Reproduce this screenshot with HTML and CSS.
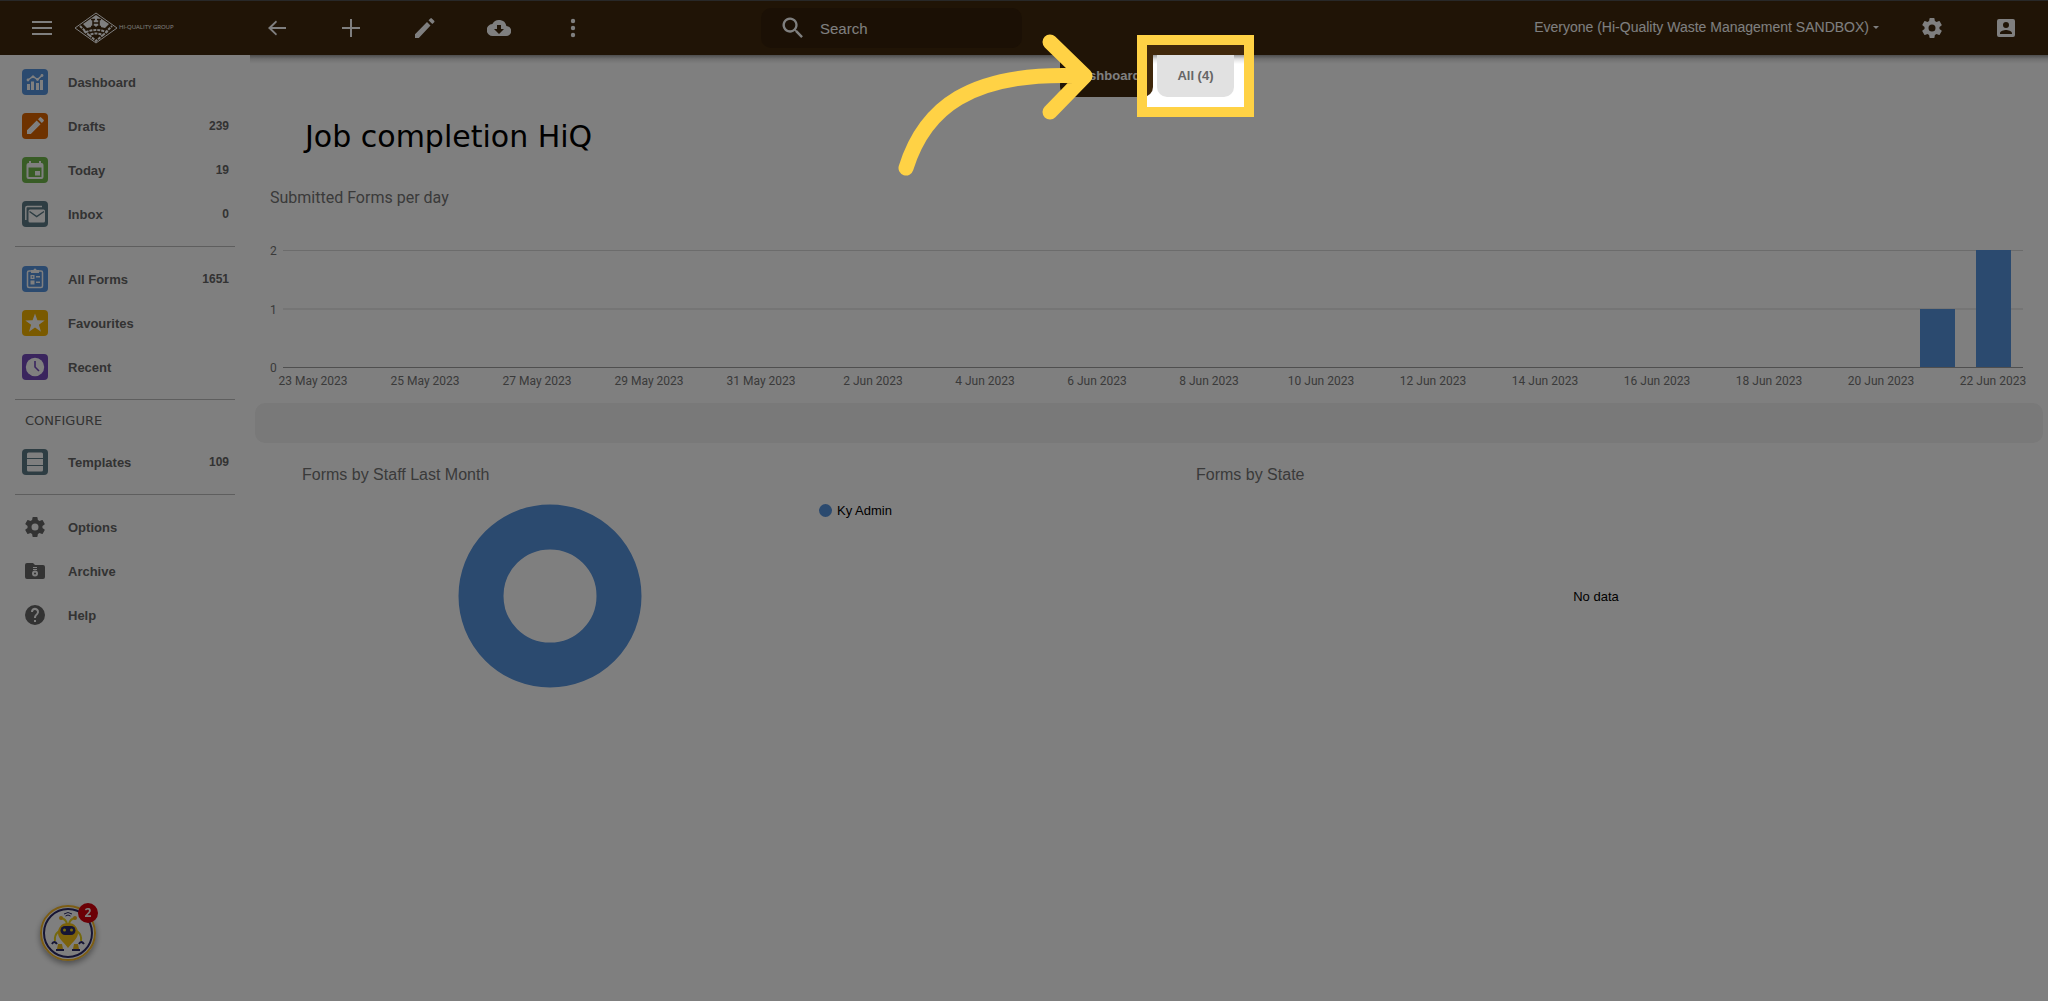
FILE: index.html
```html
<!DOCTYPE html>
<html lang="en">
<head>
<meta charset="utf-8">
<title>Dashboard</title>
<link rel="stylesheet" href="styles.css">
</head>
<body>
<header class="topbar">
  <div class="brand">
    <button class="icon-btn menu-btn" aria-label="Menu"><svg width="24" height="24" viewBox="0 0 24 24"><path d="M2 5h20v2H2zm0 6h20v2H2zm0 6h20v2H2z"/></svg></button>
    <svg class="logo" width="110" height="32" viewBox="0 0 110 32" aria-label="Hi-Quality Group">
      <path d="M22 1 43 16 22 31 1 16Z" fill="none" stroke="#fff" stroke-width="1"/>
      <path d="M22 3 35 12 31 16Q22 13 13 16L9 12Z"/>
      <path d="M17 7.500h4M23 7.500h4M17 14.500h4M23 14.500h4M19 7v8M25 7v8M19 11h6" fill="none" stroke="#40280c" stroke-width="1.500"/>
      <path d="M6 14 12 20Q22 16 32 20L38 14M10 19l5 4q7-3 14 0l5-4M15 23l7 6 7-6" fill="none" stroke="#fff" stroke-width="2" stroke-dasharray="3 1"/>
      <text x="45" y="17" class="logo-text">HI-QUALITY GROUP</text>
    </svg>
  </div>
  <div class="tools">
    <button class="icon-btn" aria-label="Back"><svg width="24" height="24" viewBox="0 0 24 24"><path d="M21 11H7l5-5-1-1.500L3 12l8 7.500 1-1.500-5-5h14z"/></svg></button>
    <button class="icon-btn" aria-label="Add"><svg width="24" height="24" viewBox="0 0 24 24"><path d="M11 3h2v8h8v2h-8v8h-2v-8H3v-2h8z"/></svg></button>
    <button class="icon-btn" aria-label="Edit"><svg width="24" height="24" viewBox="0 0 24 24"><path d="M2 18.200V22h3.800L17.500 9.500 14 6zM21.200 6.200a1 1 0 0 0 0-1.400l-2.400-2.400a1 1 0 0 0-1.400 0L15.500 4.300l3.800 3.800z"/></svg></button>
    <button class="icon-btn" aria-label="Download"><svg width="24" height="24" viewBox="0 0 24 24"><path d="M19.400 10A7.500 7.500 0 0 0 5.400 8 6 6 0 0 0 6 20h13a5 5 0 0 0 .4-10zM17 13l-5 5-5-5h3V9h4v4z"/></svg></button>
    <button class="icon-btn" aria-label="More"><svg width="24" height="24" viewBox="0 0 24 24"><circle cx="12" cy="5" r="2.200"/><circle cx="12" cy="12" r="2.200"/><circle cx="12" cy="19" r="2.200"/></svg></button>
  </div>
  <label class="search">
    <svg width="28" height="28" viewBox="0 0 24 24"><path d="M15.500 14h-.8l-.3-.3a6.500 6.500 0 1 0-.7.700l.3.300v.8l5 5 1.500-1.500zm-6 0a4.500 4.500 0 1 1 0-9 4.500 4.500 0 0 1 0 9z"/></svg>
    <input type="text" placeholder="Search" aria-label="Search">
  </label>
  <div class="account">
    <button class="org">Everyone (Hi-Quality Waste Management SANDBOX)<span class="caret"></span></button>
    <button class="icon-btn" aria-label="Settings"><svg width="24" height="24" viewBox="0 0 24 24"><use href="#gear"/></svg></button>
    <button class="icon-btn" aria-label="Profile"><svg width="24" height="24" viewBox="0 0 24 24"><path d="M5 3a2 2 0 0 0-2 2v14a2 2 0 0 0 2 2h14a2 2 0 0 0 2-2V5a2 2 0 0 0-2-2zm7 3a3 3 0 1 1 0 6 3 3 0 0 1 0-6zm6 12H6v-1c0-2 4-3.100 6-3.100s6 1.100 6 3.100z"/></svg></button>
  </div>
</header>

<div class="shell">
  <nav class="sidebar">
    <ul>
      <li><a href="#"><svg class="tile blue" viewBox="0 0 26 26"><path d="M5 15h3v6H5zm4-2.500h3V21H9zm5 1.500h3v7h-3zm4-3h3v10h-3z"/><path d="m6 11 5-3.500 4.500 3L20 6.500" class="line"/><circle cx="6" cy="11" r="1.400"/><circle cx="11" cy="7.800" r="1.400"/><circle cx="15.500" cy="10.500" r="1.400"/><circle cx="20" cy="6.500" r="1.400"/></svg><span>Dashboard</span></a></li>
      <li><a href="#"><svg class="tile orange" viewBox="0 0 26 26"><path d="M5 17.200V21h3.800L18.500 11.300 14.700 7.500zM21.600 8.200a1 1 0 0 0 0-1.400l-2.400-2.400a1 1 0 0 0-1.400 0L16 6.200 19.800 10z"/></svg><span>Drafts</span><b>239</b></a></li>
      <li><a href="#"><svg class="tile green" viewBox="0 0 26 26"><path fill-rule="evenodd" d="M7 4h2v2h8V4h2v2h.5a2 2 0 0 1 2 2v12a2 2 0 0 1-2 2h-13a2 2 0 0 1-2-2V8a2 2 0 0 1 2-2H7zM6.500 10.500V20h13v-9.500zM13 14h5v4.500h-5z"/></svg><span>Today</span><b>19</b></a></li>
      <li><a href="#"><svg class="tile slate" viewBox="0 0 26 26"><path d="M3.800 19V7a1.500 1.500 0 0 1 1.500-1.500H20" class="line"/><rect x="6.500" y="8.500" width="16.500" height="13" rx="1.500"/><path d="m7.500 10.500 7.200 5 7.300-5" fill="none" stroke="#5c7b87" stroke-width="1.500"/></svg><span>Inbox</span><b>0</b></a></li>
    </ul>
    <ul>
      <li><a href="#"><svg class="tile blue" viewBox="0 0 26 26"><rect x="5.500" y="5" width="15" height="16.500" rx="1.500" class="line"/><path d="M9 4h2.500a1.500 1.500 0 0 1 3 0H17v3H9z"/><path fill-rule="evenodd" d="M8.500 9h4v4h-4zM9.800 10.300v1.400h1.400v-1.400zM14 10h4v1.500h-4zM8.500 14.500h4v4h-4zM14 15.500h4V17h-4z"/></svg><span>All Forms</span><b>1651</b></a></li>
      <li><a href="#"><svg class="tile gold" viewBox="0 0 26 26"><path d="m13 3.500 2.400 6.800 7.300.2-5.800 4.300 2.100 7-6-4.200-6 4.200 2.100-7-5.800-4.300 7.300-.2z"/></svg><span>Favourites</span></a></li>
      <li><a href="#"><svg class="tile purple" viewBox="0 0 26 26"><circle cx="13" cy="13" r="9.200"/><path d="M13 7v6l4 4" fill="none" stroke="#744bbd" stroke-width="1.600"/></svg><span>Recent</span></a></li>
    </ul>
    <h2>CONFIGURE</h2>
    <ul class="configure">
      <li><a href="#"><svg class="tile slate" viewBox="0 0 26 26"><path d="M6.500 3.500h13a1.500 1.500 0 0 1 1.500 1.500v4H5V5a1.500 1.500 0 0 1 1.500-1.500zM5 10h16v6H5zM5 17h16v4a1.500 1.500 0 0 1-1.500 1.500h-13A1.500 1.500 0 0 1 5 21z"/></svg><span>Templates</span><b>109</b></a></li>
    </ul>
    <ul>
      <li><a href="#"><svg class="glyph" viewBox="0 0 24 24"><path id="gear" d="M12 15.500a3.500 3.500 0 1 1 0-7 3.500 3.500 0 0 1 0 7zm7.430-2.530a7.800 7.800 0 0 0 0-1.940l2.110-1.630a.5.5 0 0 0 .12-.64l-2-3.460a.5.5 0 0 0-.61-.22l-2.490 1a7.300 7.300 0 0 0-1.690-.98l-.38-2.650A.5.5 0 0 0 14 2h-4a.5.5 0 0 0-.49.420l-.38 2.650c-.61.250-1.170.590-1.690.980l-2.490-1a.5.5 0 0 0-.61.220l-2 3.460a.5.5 0 0 0 .12.640l2.110 1.630a7.800 7.800 0 0 0 0 1.940l-2.110 1.660a.5.5 0 0 0-.12.640l2 3.460c.12.220.390.300.610.220l2.490-1.010c.52.400 1.080.730 1.690.980l.38 2.650c.03.240.240.420.490.420h4c.25 0 .46-.18.490-.42l.38-2.650a7.700 7.700 0 0 0 1.690-.98l2.490 1.010c.22.080.490 0 .61-.22l2-3.460a.5.5 0 0 0-.12-.64z"/></svg><span>Options</span></a></li>
      <li><a href="#"><svg class="glyph" viewBox="0 0 24 24"><path fill-rule="evenodd" d="M4 4h6l2 2h8a2 2 0 0 1 2 2v10a2 2 0 0 1-2 2H4a2 2 0 0 1-2-2V6a2 2 0 0 1 2-2zm6 4v1h4V8zm0 2v1h4v-1zm2 1.500a3 3 0 1 0 0 6 3 3 0 0 0 0-6zm0 2a1 1 0 1 1 0 2 1 1 0 0 1 0-2z"/></svg><span>Archive</span></a></li>
      <li><a href="#"><svg class="glyph" viewBox="0 0 24 24"><path d="M12 2a10 10 0 1 0 0 20 10 10 0 0 0 0-20zm1 17h-2v-2h2zm2.070-7.750-.9.920C13.450 12.900 13 13.500 13 15h-2v-.5c0-1.100.45-2.100 1.170-2.830l1.240-1.260A2 2 0 1 0 10 9H8a4 4 0 1 1 7.070 2.250z"/></svg><span>Help</span></a></li>
    </ul>
  </nav>

  <main class="content">
    <div class="tabs">
      <button class="tab active">Dashboard</button>
      <button class="tab">All (4)</button>
    </div>
    <h1>Job completion HiQ</h1>
    <section class="per-day">
      <h3>Submitted Forms per day</h3>
      <div class="chart">
        <div class="y-axis"><span>2</span><span>1</span><span>0</span></div>
        <ol class="plot">
          <li><small>23 May 2023</small></li><li></li>
          <li><small>25 May 2023</small></li><li></li>
          <li><small>27 May 2023</small></li><li></li>
          <li><small>29 May 2023</small></li><li></li>
          <li><small>31 May 2023</small></li><li></li>
          <li><small>2 Jun 2023</small></li><li></li>
          <li><small>4 Jun 2023</small></li><li></li>
          <li><small>6 Jun 2023</small></li><li></li>
          <li><small>8 Jun 2023</small></li><li></li>
          <li><small>10 Jun 2023</small></li><li></li>
          <li><small>12 Jun 2023</small></li><li></li>
          <li><small>14 Jun 2023</small></li><li></li>
          <li><small>16 Jun 2023</small></li><li></li>
          <li><small>18 Jun 2023</small></li><li></li>
          <li><small>20 Jun 2023</small></li>
          <li><i class="bar" style="height:50%"></i></li>
          <li><i class="bar" style="height:100%"></i><small>22 Jun 2023</small></li>
        </ol>
      </div>
    </section>
    <div class="band"></div>
    <div class="split">
      <section class="panel">
        <h3>Forms by Staff Last Month</h3>
        <div class="donut-row">
          <svg width="184" height="184" viewBox="0 0 184 184" aria-label="Ky Admin 100%"><circle cx="92" cy="92" r="69" fill="none" stroke="#5794de" stroke-width="45"/></svg>
          <div class="legend"><span class="dot"></span>Ky Admin</div>
        </div>
      </section>
      <section class="panel">
        <h3>Forms by State</h3>
        <p class="empty">No data</p>
      </section>
    </div>
  </main>
</div>

<button class="assistant" aria-label="Assistant">
  <svg width="56" height="56" viewBox="0 0 56 56">
    <circle cx="28" cy="28" r="27" fill="#fff" stroke="#f6b828" stroke-width="2"/>
    <circle cx="28" cy="28" r="24" fill="#fff" stroke="#2c2a68" stroke-width="2"/>
    <path d="M24 9q4-3 8 0M25.500 11q2.500-2 5 0" fill="none" stroke="#2c2a68"/>
    <path d="M21 13q5 1 6 6M35 13q-5 1-6 6M19 26q-5 4-4 10M37 26q5 4 4 10" fill="none" stroke="#e8d21c" stroke-width="2"/>
    <circle cx="21" cy="13" r="2" fill="#f0b41e"/><circle cx="35" cy="13" r="2" fill="#f0b41e"/>
    <path d="M28 18c-7 0-10 5-10 10 0 6 6 9 10 15 4-6 10-9 10-15 0-5-3-10-10-10z" fill="#f8c416"/>
    <rect x="20.500" y="21" width="15" height="9" rx="4.500" fill="#2c2a68"/>
    <circle cx="24.500" cy="25" r="1.500" fill="#f4dc20"/><circle cx="31.500" cy="25" r="1.500" fill="#f4dc20"/>
    <path d="M12 39q2-4 5 0M39 39q2-4 5 0M16 45h8M32 45h8" fill="none" stroke="#2c2a68" stroke-width="2"/>
    <path d="M17 44l1-5h4l1 5zM33 44l1-5h4l1 5z" fill="#e8b81c"/>
  </svg>
  <span class="badge">2</span>
</button>

<div class="spotlight"></div>
<svg class="pointer" width="212" height="152" viewBox="0 0 212 152"><path d="M16 142C34 84 78 44 195 50M160 16l35 34-35 36"/></svg>
</body>
</html>
```
FILE: styles.css
```css
* { box-sizing: border-box; }
body {
  margin: 0;
  min-height: 100vh;
  display: flex;
  flex-direction: column;
  background: #fff;
  font-family: "Liberation Sans", Arial, sans-serif;
  font-size: 13px;
  color: #666;
  overflow: hidden;
}
ul, ol { list-style: none; margin: 0; padding: 0; }
button { border: 0; padding: 0; background: none; font: inherit; color: inherit; }
h1, h2, h3, p { margin: 0; font-weight: 400; }
a { color: inherit; text-decoration: none; }

/* top bar */
.topbar {
  height: 55px;
  display: flex;
  align-items: center;
  background: #40280c;
  border-top: 1px solid #505050;
  color: #fff;
  fill: #fff;
}
.icon-btn { width: 24px; height: 24px; flex: none; }
.icon-btn svg { display: block; }
.brand { width: 250px; padding-left: 30px; display: flex; align-items: center; gap: 20px; flex: none; }
.logo { flex: none; }
.logo-text { font-family: "Open Sans", "Liberation Sans", sans-serif; font-size: 6px; }
.tools { display: flex; gap: 50px; padding-left: 15px; }
.search {
  width: 261px;
  height: 40px;
  margin-left: 176px;
  padding-left: 18px;
  display: flex;
  align-items: center;
  gap: 13px;
  border-radius: 10px;
  background: #36200a;
}
.search input {
  width: 180px;
  border: 0;
  padding: 0;
  background: none;
  font: 15px "Liberation Sans", Arial, sans-serif;
  color: #fff;
}
.search input::placeholder { color: #fff; opacity: 1; }
.account { margin-left: auto; padding-right: 30px; display: flex; align-items: center; gap: 50px; }
.org { font-size: 14px; display: flex; align-items: center; gap: 4px; margin-right: -9px; padding-bottom: 2px; }
.caret { border: 3px solid transparent; border-top-color: #fff; border-bottom: 0; }

/* page */
.shell { flex: 1; display: flex; }
.sidebar { width: 250px; flex: none; padding: 5px 15px; background: #fff; font-weight: 700; }
.sidebar ul { border-bottom: 1px solid #bdbdbd; padding-bottom: 10px; margin-bottom: 10px; }
.sidebar ul:last-child { border: 0; }
.sidebar a { height: 44px; padding: 0 6px 0 7px; display: flex; align-items: center; }
.sidebar span { flex: 1; padding-left: 20px; }
.sidebar b { font-size: 12px; padding-bottom: 1px; }
.sidebar h2 { font: 13px/22px "DejaVu Sans", Verdana, sans-serif; padding-left: 10px; }
.sidebar .configure { margin-top: 8px; }
.tile, .glyph { width: 26px; height: 26px; flex: none; }
.tile { border-radius: 4px; fill: #fff; }
.glyph { padding: 1px; fill: #666; }
.line { fill: none; stroke: #fff; stroke-width: 1.5; }
.blue { background: #5794de; }
.orange { background: #dc6400; }
.green { background: #71b84b; }
.slate { background: #5c7b87; }
.gold { background: #f5b400; }
.purple { background: #744bbd; }

.content {
  flex: 1;
  min-width: 0;
  padding: 0 5px;
  background: linear-gradient(rgba(0, 0, 0, .4), rgba(0, 0, 0, .12) 4px, transparent) 0 0 / 100% 9px no-repeat;
}
.tabs { display: flex; justify-content: center; gap: 4px; padding-right: 4px; }
.tab {
  height: 42px;
  padding: 0 20px 2px;
  border-radius: 0 0 10px 10px;
  background: #e1e1e1;
  font-weight: 700;
}
.tab.active { padding: 0 13px 2px 12px; background: #40280c; color: #fff; }
h1 { margin-top: 17px; padding-left: 50px; font: 30px/46px "DejaVu Sans", Verdana, sans-serif; color: #000; }
h3 { font-size: 16px; line-height: 22px; color: #757575; }

/* forms per day */
.per-day { margin-top: 27px; padding: 0 20px 0 15px; font-family: Roboto, sans-serif; }
.chart { display: flex; gap: 7px; margin-top: 41px; font-size: 12px; line-height: 14px; color: #757575; }
.y-axis { width: 6px; height: 131px; margin-top: -6px; display: flex; flex-direction: column; justify-content: space-between; }
.plot {
  flex: 1;
  height: 118px;
  margin-bottom: 35px;
  padding: 0 2px;
  display: flex;
  border-bottom: 1px solid #9e9e9e;
  background: linear-gradient(#d8d8d8, #d8d8d8) 0 0 / 100% 1px no-repeat,
    linear-gradient(#ebebeb, #ebebeb) 0 50% / 100% 2px no-repeat;
}
.plot li { flex: 1; min-width: 0; height: 117px; display: flex; flex-direction: column; align-items: center; justify-content: flex-end; position: relative; }
.bar { width: 62.5%; background: #5794de; }
.plot small { position: absolute; top: 100%; padding-top: 7px; font-size: 12px; white-space: nowrap; }

.band { height: 40px; border-radius: 10px; background: #f2f2f2; }
.split { display: grid; grid-template-columns: 1fr 1fr; margin-top: 21px; }
.panel h3 { padding-left: 47px; }
.donut-row { display: flex; align-items: flex-start; gap: 177px; margin-top: 18px; padding-left: 203px; }
.legend { display: flex; align-items: center; gap: 5px; color: #000; line-height: 10px; }
.dot { width: 13px; height: 13px; border-radius: 50%; background: #5794de; }
.empty { margin-top: 103px; text-align: center; line-height: 16px; color: #000; }

/* floating layers */
.assistant { position: fixed; left: 40px; bottom: 40px; width: 56px; height: 56px; border-radius: 50%; box-shadow: 0 3px 6px rgba(0, 0, 0, .4); }
.assistant svg { display: block; }
.badge {
  position: absolute;
  top: -2px;
  right: -2px;
  width: 20px;
  height: 20px;
  border-radius: 50%;
  background: #d8000c;
  color: #fff;
  font: 700 12px/20px "Open Sans", sans-serif;
}
.spotlight {
  position: absolute;
  left: calc(50% + 123px);
  top: 45px;
  width: 97px;
  height: 62px;
  outline: 10px solid #ffd245;
  box-shadow: 0 0 0 4000px rgba(0, 0, 0, .5);
}
.pointer {
  position: absolute;
  left: calc(50% - 134px);
  top: 26px;
  fill: none;
  stroke: #ffd245;
  stroke-width: 15;
  stroke-linecap: round;
  stroke-linejoin: round;
}
```
